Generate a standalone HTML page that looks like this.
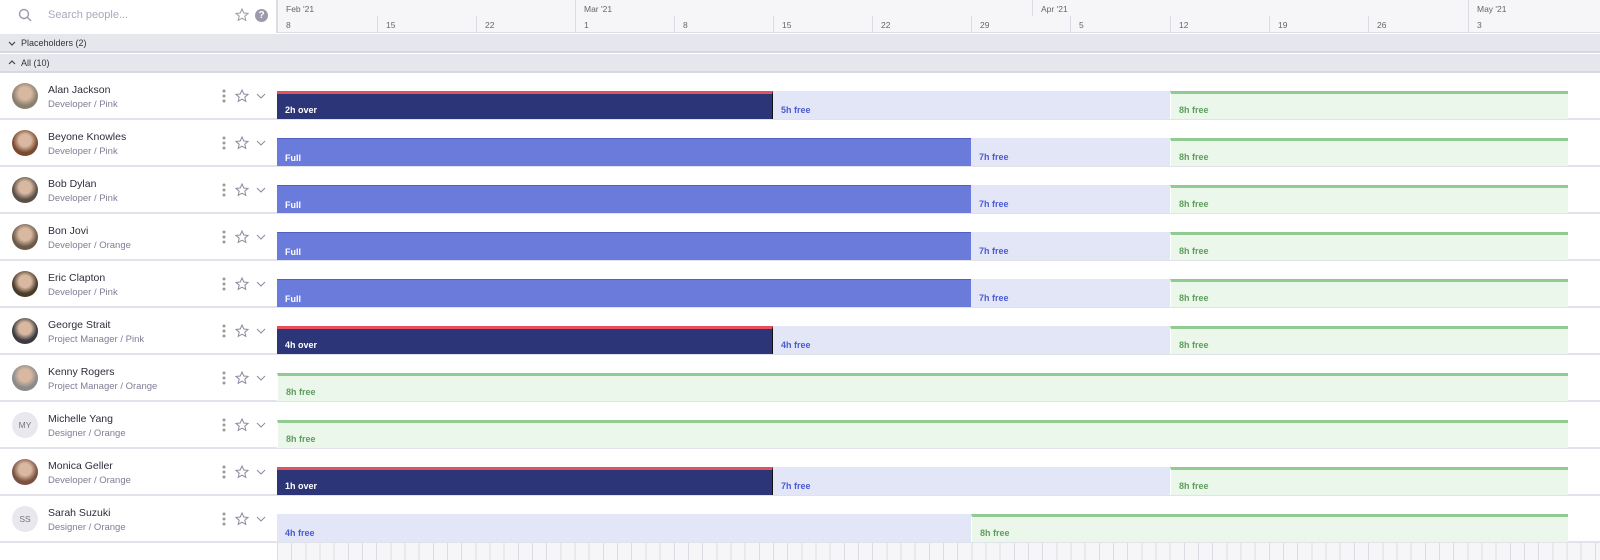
<!DOCTYPE html>
<html><head><meta charset="utf-8"><style>
*{box-sizing:border-box;margin:0;padding:0}
body{width:1600px;height:560px;overflow:hidden;background:#fff;font-family:"Liberation Sans",Arial,sans-serif;position:relative}
.abs{position:absolute}
.hdr{left:0;top:0;width:1600px;height:33px;background:#f6f6f9;border-bottom:1px solid #dcdce4}
.left{left:0;top:0;width:277px;height:33px;background:#fff;border-right:1px solid #dcdce4}
.grp{left:0;width:1600px;height:19px;background:#e6e7ec;border-bottom:2px solid #d8d9e0;font-size:9px;color:#333;padding:4px 0 0 21px}
.row{left:0;width:1600px;height:47px;border-bottom:2px solid #e2e2ea}
.av{left:12px;width:26px;height:26px;border-radius:50%}
.nm{left:48px;font-size:10.5px;color:#2d2d3a}
.rl{left:48px;font-size:9.5px;color:#7e7e95}
.bar{height:28px;font-size:9px;font-weight:bold;padding:14px 0 0 8px}
.ov{background:#2c3577;color:#fff;border-top:3px solid #e5505c;border-right:1px solid #111;padding-top:11px}
.fu{background:#6b7bdc;color:#fff;border-top:1px solid #5060c0}
.fr{background:#e3e6f7;color:#4a5bd4}
.gr{background:#eaf7ea;color:#5f9d5f;border-top:3px solid #92cb92;padding-top:11px;border-left:1px solid #fff}
.tk{top:16px;height:17px;border-left:1px solid #dcdce4;font-size:8.5px;color:#666;padding:4px 0 0 8px}
.mo{top:0;height:16px;border-left:1px solid #dcdce4;font-size:8.5px;color:#666;padding:4px 0 0 8px}
</style></head><body>
<div class="abs hdr"></div>
<div class="abs left">
<svg class="abs" style="left:18px;top:8px" width="14" height="14" viewBox="0 0 14 14"><circle cx="6" cy="6" r="4.5" fill="none" stroke="#9a9aab" stroke-width="1.4"/><path d="M9.3 9.3L13 13" stroke="#9a9aab" stroke-width="1.4"/></svg>
<div class="abs" style="left:48px;top:9px;font-size:11px;color:#a9a9bd">Search people...</div>
<svg class="abs" style="left:235px;top:8px" width="14" height="14" viewBox="0 0 14 14"><path d="M7 1l1.8 4 4.2.4-3.2 2.8 1 4.2L7 10.2 3.2 12.4l1-4.2L1 5.4l4.2-.4z" fill="none" stroke="#9a9aab" stroke-width="1"/></svg>
<div class="abs" style="left:255px;top:9px;width:13px;height:13px;border-radius:50%;background:#9a9aab;color:#fff;font-size:10px;font-weight:bold;text-align:center;line-height:13px">?</div>
</div>
<div class="abs mo" style="left:277px">Feb '21</div>
<div class="abs mo" style="left:575px">Mar '21</div>
<div class="abs mo" style="left:1032px">Apr '21</div>
<div class="abs mo" style="left:1468px">May '21</div>
<div class="abs tk" style="left:277px">8</div><div class="abs tk" style="left:377px">15</div><div class="abs tk" style="left:476px">22</div><div class="abs tk" style="left:575px">1</div><div class="abs tk" style="left:674px">8</div><div class="abs tk" style="left:773px">15</div><div class="abs tk" style="left:872px">22</div><div class="abs tk" style="left:971px">29</div><div class="abs tk" style="left:1070px">5</div><div class="abs tk" style="left:1170px">12</div><div class="abs tk" style="left:1269px">19</div><div class="abs tk" style="left:1368px">26</div><div class="abs tk" style="left:1468px">3</div>
<div class="abs grp" style="top:34px"><svg style="position:absolute;left:8px;top:7px" width="8" height="5"><path d="M1 1l3 3 3-3" fill="none" stroke="#444" stroke-width="1.2"/></svg>Placeholders (2)</div>
<div class="abs grp" style="top:54px"><svg style="position:absolute;left:8px;top:6px" width="8" height="5"><path d="M1 4l3-3 3 3" fill="none" stroke="#444" stroke-width="1.2"/></svg>All (10)</div>

<div id="rows"></div>
<div class="abs" style="left:277px;top:543px;width:1323px;height:17px;background:repeating-linear-gradient(90deg,#dcdce4 0 1px,#f6f6f9 1px 14.17px)"></div>

<script>
var P=[["Alan Jackson","Developer / Pink","#8a8070",[["ov",277,773,"2h over"],["fr",773,1170,"5h free"],["gr",1170,1568,"8h free"]]],
["Beyone Knowles","Developer / Pink","#7a4a30",[["fu",277,971,"Full"],["fr",971,1170,"7h free"],["gr",1170,1568,"8h free"]]],
["Bob Dylan","Developer / Pink","#5a5048",[["fu",277,971,"Full"],["fr",971,1170,"7h free"],["gr",1170,1568,"8h free"]]],
["Bon Jovi","Developer / Orange","#6a5a4a",[["fu",277,971,"Full"],["fr",971,1170,"7h free"],["gr",1170,1568,"8h free"]]],
["Eric Clapton","Developer / Pink","#4a3a2a",[["fu",277,971,"Full"],["fr",971,1170,"7h free"],["gr",1170,1568,"8h free"]]],
["George Strait","Project Manager / Pink","#3a3a40",[["ov",277,773,"4h over"],["fr",773,1170,"4h free"],["gr",1170,1568,"8h free"]]],
["Kenny Rogers","Project Manager / Orange","#8a8a8a",[["gr",277,1568,"8h free"]]],
["Michelle Yang","Designer / Orange","MY",[["gr",277,1568,"8h free"]]],
["Monica Geller","Developer / Orange","#7a5040",[["ov",277,773,"1h over"],["fr",773,1170,"7h free"],["gr",1170,1568,"8h free"]]],
["Sarah Suzuki","Designer / Orange","SS",[["fr",277,971,"4h free"],["gr",971,1568,"8h free"]]]];
var h="";
P.forEach(function(p,i){var t=73+i*47;
h+='<div class="abs row" style="top:'+t+'px"></div>';
if(p[2].charAt(0)=="#")h+='<div class="abs av" style="top:'+(t+10)+'px;background:radial-gradient(circle at 50% 40%,#d8b8a0 0 30%,'+p[2]+' 60%)"></div>';
else h+='<div class="abs av" style="top:'+(t+10)+'px;background:#e8e8ee;color:#777;font-size:8.5px;text-align:center;line-height:26px">'+p[2]+'</div>';
h+='<div class="abs nm" style="top:'+(t+11)+'px">'+p[0]+'</div><div class="abs rl" style="top:'+(t+26)+'px">'+p[1]+'</div>';
h+='<svg class="abs" style="left:221px;top:'+(t+15)+'px" width="6" height="16"><circle cx="3" cy="3" r="1.5" fill="#999"/><circle cx="3" cy="8" r="1.5" fill="#999"/><circle cx="3" cy="13" r="1.5" fill="#999"/></svg>';
h+='<svg class="abs" style="left:235px;top:'+(t+16)+'px" width="14" height="14" viewBox="0 0 14 14"><path d="M7 1l1.8 4 4.2.4-3.2 2.8 1 4.2L7 10.2 3.2 12.4l1-4.2L1 5.4l4.2-.4z" fill="none" stroke="#8a8aa0" stroke-width="1"/></svg>';
h+='<svg class="abs" style="left:256px;top:'+(t+20)+'px" width="10" height="6"><path d="M1 1l4 4 4-4" fill="none" stroke="#8a8aa0" stroke-width="1"/></svg>';
p[3].forEach(function(b){h+='<div class="abs bar '+b[0]+'" style="left:'+b[1]+'px;top:'+(t+18)+'px;width:'+(b[2]-b[1])+'px">'+b[3]+'</div>';});
});
document.getElementById("rows").outerHTML=h;
</script>
</body></html>
